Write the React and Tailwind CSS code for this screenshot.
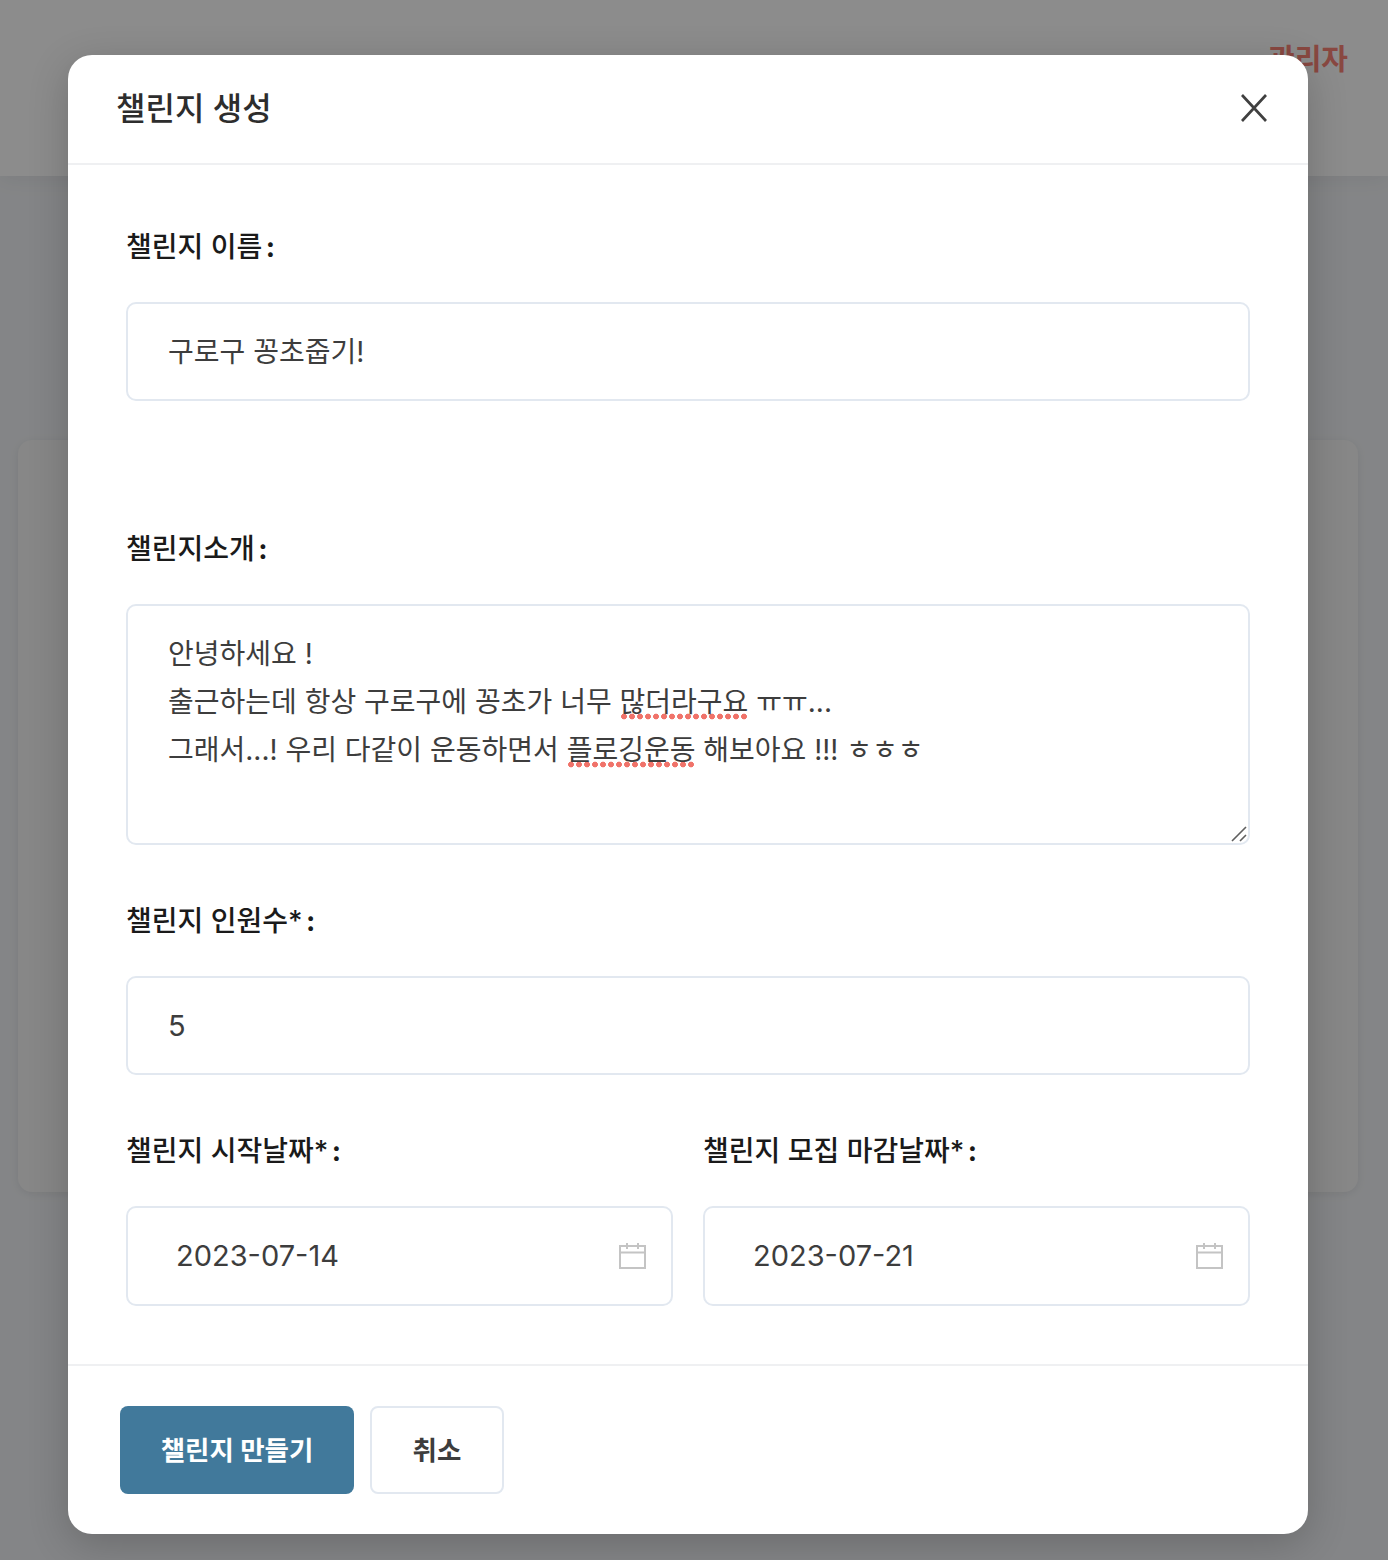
const font = { fontFamily: 'Inter, "Noto Sans CJK KR", "Noto Sans", sans-serif' };

const fieldClass = "w-full border-2 border-[#e2e8f0] rounded-[10px] pr-4 text-[#3d3d3d] bg-white outline-none";

const CalendarIcon = () => (
  <svg width="27" height="27" viewBox="0 0 27 27" fill="none" stroke="#c4c4c4" strokeWidth="2" className="absolute right-[27px] top-[36px]">
    <rect x="1" y="4" width="25" height="22" />
    <path d="M1 10.5H26M8 1V7M19 1V7" />
  </svg>
);

const Label = ({ children }) => (
  <label className="block text-[28px] leading-[40px] font-medium text-[#1a1a1a] translate-y-px">
    {children} <span className="-ml-[4px] font-bold">:</span>
  </label>
);

const DateField = ({ label, value }) => (
  <div className="flex-1">
    <Label>{label}</Label>
    <div className="relative mt-[36px]">
      <input readOnly value={value} className={`${fieldClass} h-[100px] pl-[48px] pb-[2px] text-[29px]`} />
      <CalendarIcon />
    </div>
  </div>
);

const Typo = ({ children }) => (
  <span className="pb-[1px] bg-[radial-gradient(circle,#f0736a_2.6px,transparent_3.2px)] bg-[length:8px_7px] bg-repeat-x bg-[position:0_100%]">{children}</span>
);

const App = () => {
  return (
    <div className="relative h-[1560px] w-full overflow-hidden bg-[#f1f3f6]" style={font}>
      {/* page behind the modal */}
      <div className="flex h-[176px] items-start justify-end bg-white pr-[40px] pt-[38px] shadow-[0_4px_20px_rgba(0,0,0,0.06)]">
        <span className="text-[29px] font-bold text-[#fa8477]">관리자</span>
      </div>
      <div className="ml-[18px] mt-[264px] h-[752px] w-[1340px] rounded-[14px] bg-[#f6f6f6] shadow-[0_2px_10px_rgba(0,0,0,0.08)]" />

      {/* overlay */}
      <div className="absolute inset-0 bg-black/45" />

      <div className="absolute left-[68px] top-[55px] flex h-[1479px] w-[1240px] flex-col rounded-[24px] bg-white shadow-[0_10px_40px_rgba(0,0,0,0.2)]">
        <div className="flex h-[110px] shrink-0 items-center justify-between border-b-2 border-[#eff0f2] pl-[48px] pr-[41px]">
          <h2 className="text-[32px] font-medium text-[#2d2d2d]">챌린지 생성</h2>
          <svg width="26" height="28" viewBox="0 0 26 28" stroke="#404040" strokeWidth="2.7" className="-translate-y-[1px]">
            <path d="M1 1L25 27M25 1L1 27" />
          </svg>
        </div>

        <div className="flex-1 px-[58px] pt-[61px]">
          <Label>챌린지 이름</Label>
          <input readOnly value="구로구 꽁초줍기!" className={`${fieldClass} mt-[36px] h-[99px] pl-[40px] pb-[3px] text-[28px]`} />

          <div className="mt-[127px]">
            <Label>챌린지소개</Label>
          </div>
          <div className="relative mt-[36px] h-[241px] rounded-[10px] border-2 border-[#e2e8f0] pl-[40px] pt-[24px] text-[28px] leading-[48px] text-[#3d3d3d]">
            <p>안녕하세요 !</p>
            <p>출근하는데 항상 구로구에 꽁초가 너무 <Typo>많더라구요</Typo> ㅠㅠ...</p>
            <p>그래서...! 우리 다같이 운동하면서 <Typo>플로깅운동</Typo> 해보아요 !!! ㅎㅎㅎ</p>
            <svg width="16" height="16" viewBox="0 0 16 16" stroke="#5f5f5f" strokeWidth="1.6" className="absolute bottom-[1px] right-[1px]">
              <path d="M1 15L15 1M9 15L15 9" />
            </svg>
          </div>

          <div className="mt-[55px]">
            <Label>챌린지 인원수*</Label>
          </div>
          <input readOnly value="5" className={`${fieldClass} mt-[36px] h-[99px] pl-[40px] text-[29px]`} />

          <div className="mt-[55px] flex gap-[30px]">
            <DateField label="챌린지 시작날짜*" value="2023-07-14" />
            <DateField label="챌린지 모집 마감날짜*" value="2023-07-21" />
          </div>
        </div>

        <div className="flex h-[170px] shrink-0 items-start gap-4 border-t-2 border-[#eff0f2] pl-[52px] pt-[40px]">
          <button className="h-[88px] w-[234px] rounded-[8px] bg-[#41799b] pt-[2px] text-[26.5px] font-bold text-white">챌린지 만들기</button>
          <button className="h-[88px] w-[134px] rounded-[8px] border-2 border-[#e2e8f0] bg-white pt-[2px] text-[26.5px] font-bold text-[#3d3d3d]">취소</button>
        </div>
      </div>
    </div>
  );
};

export default App;
